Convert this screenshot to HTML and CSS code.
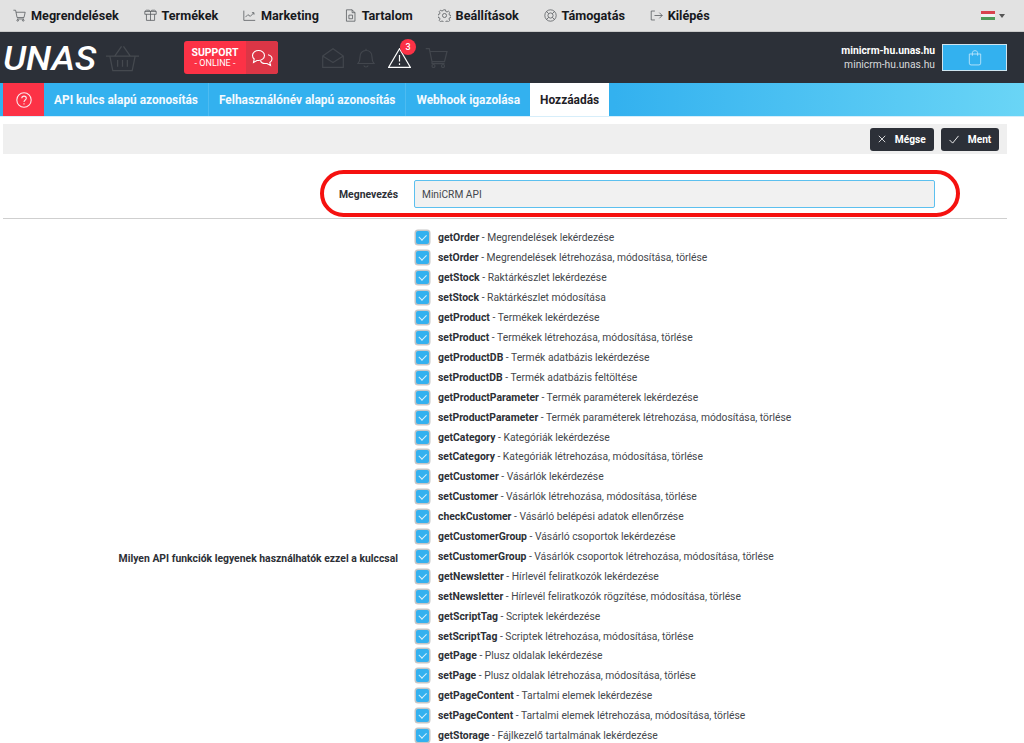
FILE: index.html
```html
<!DOCTYPE html>
<html lang="hu">
<head>
<meta charset="utf-8">
<title>UNAS</title>
<link rel="stylesheet" href="styles.css">
</head>
<body>
<nav class="topbar">
  <a class="top-item"><svg class="ti" viewBox="0 0 16 16"><path d="M.5 1.500h2.700l1.800 9h8.500l1.500-6.500H3.800M5 12.300h8.500"/><circle cx="5.800" cy="14" r="1"/><circle cx="12.600" cy="14" r="1"/></svg>Megrendelések</a>
  <a class="top-item"><svg class="ti" viewBox="0 0 16 16"><path d="M3 6.500V14h10V6.500M1 3h14v3.500H1zM8 3v11M1 3l2-1.500h3.500L8 3l1.500-1.500H13L15 3"/></svg>Termékek</a>
  <a class="top-item"><svg class="ti" viewBox="0 0 16 16"><path d="M1 2v12h14M3 10l3-3 3 2 4-4M11 4.500h2.500V7"/></svg>Marketing</a>
  <a class="top-item"><svg class="ti" viewBox="0 0 14 16"><path d="M2 1h7l3.500 3.500V15H2zM9 1v3.500h3.500M5 7.500h4.500v4.500H5z"/></svg>Tartalom</a>
  <a class="top-item"><svg class="ti" viewBox="0 0 16 16"><circle cx="8" cy="8" r="2.500"/><path d="M6.800 1h2.400l.4 2 1.500.7 1.800-1 1.600 1.600-1 1.800.7 1.500 2 .4v2.400l-2 .4-.7 1.500 1 1.800-1.600 1.600-1.800-1-1.500.7-.4 2H6.800l-.4-2-1.500-.7-1.800 1-1.600-1.600 1-1.800-.7-1.500-2-.4V6.800l2-.4.700-1.500-1-1.800 1.600-1.600 1.800 1 1.500-.7z"/></svg>Beállítások</a>
  <a class="top-item"><svg class="ti" viewBox="0 0 16 16"><circle cx="8" cy="8" r="7"/><circle cx="8" cy="8" r="3.200"/><path d="M3 3l2.700 2.700M13 3l-2.700 2.700M3 13l2.700-2.700M13 13l-2.700-2.700"/></svg>Támogatás</a>
  <a class="top-item"><svg class="ti" viewBox="0 0 16 16"><path d="M6 2.500H1.500v11H6M5.500 8H15M11.500 4.500L15 8l-3.500 3.500"/></svg>Kilépés</a>
  <div class="lang">
    <span class="flag"><i class="flag-r"></i><i class="flag-w"></i><i class="flag-g"></i></span>
    <span class="caret"></span>
  </div>
</nav>

<header class="darkbar">
  <div class="logo">UNAS</div>
  <svg class="basket" viewBox="0 0 36 28"><path d="M1 12h34M5 12l3 15h20l3-15M10 12l7-10M26 12l-7-10M13 16v7M18 16v7M23 16v7"/></svg>
  <div class="support">
    <div class="support-text"><b>SUPPORT</b><span>- ONLINE -</span></div>
    <div class="support-icon">
      <svg viewBox="0 0 22 18"><path d="M1.500 6.500C1.500 3.500 4.500 1.500 7.500 1.500s6 2 6 5-3 5-6 5H6L2.500 13.500l.7-3.500C2 9 1.500 7.800 1.500 6.500z"/><path d="M9.500 11.500c.5 2 2.500 3 4.500 3h2l3.500 2-.7-3c1.500-1 2.200-2.200 2.200-3.500 0-2.200-1.800-3.700-4-4.200"/></svg>
    </div>
  </div>
  <div class="alerts">
    <svg class="al-mail" viewBox="0 0 22 20"><path d="M.7 8L11 .7 21.300 8v11.300H.7zM.7 8L11 14.500 21.300 8"/></svg>
    <svg class="al-bell" viewBox="0 0 18 20"><path d="M1 15.500c1.500-1.500 2-3 2-6.500S5 2.500 9 2.500s6 3 6 6.500.5 5 2 6.500zM9 2.500V.7M7 17.500c0 2 4 2 4 0"/></svg>
    <div class="warn">
      <svg viewBox="0 0 23 20"><path d="M11.500.8L22.300 19.300H.7zM11.500 7v6.500M11.500 15.300v1.700"/></svg>
      <span class="badge">3</span>
    </div>
    <svg class="al-cart" viewBox="0 0 23 20"><path d="M.7.7h3.600l2.700 13h12.500L22 3.500H5M7 13.700v2h12.500"/><circle cx="8.500" cy="18" r="1.500"/><circle cx="18" cy="18" r="1.500"/></svg>
  </div>
  <div class="account">
    <div class="account-text"><b>minicrm-hu.unas.hu</b><span>minicrm-hu.unas.hu</span></div>
    <div class="bag"><svg viewBox="0 0 16 18"><path d="M1.500 5h13v10.500a2 2 0 0 1-2 2h-9a2 2 0 0 1-2-2zM5 7V3.500C5 .5 11 .5 11 3.500V7"/></svg></div>
  </div>
</header>

<div class="tabs">
  <a class="tab-help"><svg viewBox="0 0 16 16"><circle cx="8" cy="8" r="7.200"/><path d="M5.800 6.200C5.800 3.400 10.300 3.400 10.300 6.200 10.300 8 8 8 8 10M8 11.300v1.300"/></svg></a>
  <a class="tab">API kulcs alapú azonosítás</a>
  <a class="tab">Felhasználónév alapú azonosítás</a>
  <a class="tab tab-last">Webhook igazolása</a>
  <a class="tab tab-active">Hozzáadás</a>
</div>

<div class="content">
<div class="toolbar">
  <button class="btn"><svg viewBox="0 0 10 10"><path d="M1 1l8 8M9 1l-8 8"/></svg>Mégse</button>
  <button class="btn"><svg viewBox="0 0 12 10"><path d="M1 5.500l3.500 3.500L11 1"/></svg>Ment</button>
</div>

<main class="form">
  <div class="form-row name-row">
    <label class="form-label">Megnevezés</label>
    <div class="form-field"><input class="text-input" value="MiniCRM API"></div>
    <div class="ring"></div>
  </div>
  <div class="form-row funcs-row">
    <label class="form-label">Milyen API funkciók legyenek használhatók ezzel a kulccsal</label>
    <ul class="funcs">
      <li><span class="check"></span><b>getOrder</b> - Megrendelések lekérdezése</li>
      <li><span class="check"></span><b>setOrder</b> - Megrendelések létrehozása, módosítása, törlése</li>
      <li><span class="check"></span><b>getStock</b> - Raktárkészlet lekérdezése</li>
      <li><span class="check"></span><b>setStock</b> - Raktárkészlet módosítása</li>
      <li><span class="check"></span><b>getProduct</b> - Termékek lekérdezése</li>
      <li><span class="check"></span><b>setProduct</b> - Termékek létrehozása, módosítása, törlése</li>
      <li><span class="check"></span><b>getProductDB</b> - Termék adatbázis lekérdezése</li>
      <li><span class="check"></span><b>setProductDB</b> - Termék adatbázis feltöltése</li>
      <li><span class="check"></span><b>getProductParameter</b> - Termék paraméterek lekérdezése</li>
      <li><span class="check"></span><b>setProductParameter</b> - Termék paraméterek létrehozása, módosítása, törlése</li>
      <li><span class="check"></span><b>getCategory</b> - Kategóriák lekérdezése</li>
      <li><span class="check"></span><b>setCategory</b> - Kategóriák létrehozása, módosítása, törlése</li>
      <li><span class="check"></span><b>getCustomer</b> - Vásárlók lekérdezése</li>
      <li><span class="check"></span><b>setCustomer</b> - Vásárlók létrehozása, módosítása, törlése</li>
      <li><span class="check"></span><b>checkCustomer</b> - Vásárló belépési adatok ellenőrzése</li>
      <li><span class="check"></span><b>getCustomerGroup</b> - Vásárló csoportok lekérdezése</li>
      <li><span class="check"></span><b>setCustomerGroup</b> - Vásárlók csoportok létrehozása, módosítása, törlése</li>
      <li><span class="check"></span><b>getNewsletter</b> - Hírlevél feliratkozók lekérdezése</li>
      <li><span class="check"></span><b>setNewsletter</b> - Hírlevél feliratkozók rögzítése, módosítása, törlése</li>
      <li><span class="check"></span><b>getScriptTag</b> - Scriptek lekérdezése</li>
      <li><span class="check"></span><b>setScriptTag</b> - Scriptek létrehozása, módosítása, törlése</li>
      <li><span class="check"></span><b>getPage</b> - Plusz oldalak lekérdezése</li>
      <li><span class="check"></span><b>setPage</b> - Plusz oldalak létrehozása, módosítása, törlése</li>
      <li><span class="check"></span><b>getPageContent</b> - Tartalmi elemek lekérdezése</li>
      <li><span class="check"></span><b>setPageContent</b> - Tartalmi elemek létrehozása, módosítása, törlése</li>
      <li><span class="check"></span><b>getStorage</b> - Fájlkezelő tartalmának lekérdezése</li>
    </ul>
  </div>
</main>
</div>
</body>
</html>
```
FILE: styles.css
```css
* { box-sizing: border-box; }
html, body { margin: 0; height: 743px; overflow: hidden; background: #fff; }
body { font-family: Roboto, "Liberation Sans", sans-serif; color: #33363c; }
svg { fill: none; stroke: currentColor; stroke-width: 1; display: block; flex: none; }

.topbar { height: 32px; background: #e2e2e2; border-bottom: 1px solid #c9c9c9; display: flex; align-items: center; padding-left: 13px; }
.top-item { display: flex; align-items: center; font-size: 12.650px; font-weight: 700; color: #17191d; margin-right: 24.800px; white-space: nowrap; }
.ti { width: 13px; height: 13px; margin-right: 5px; color: #55585d; stroke-width: .95; }
.lang { margin-left: auto; margin-right: 19px; display: flex; align-items: center; gap: 4px; }
.flag { width: 14px; height: 9px; display: flex; flex-direction: column; }
.flag i { flex: 1; display: block; }
.flag-r { background: #d9434e; }
.flag-w { background: #f2f2f2; }
.flag-g { background: #4f9a58; }
.caret { width: 0; height: 0; border: 3px solid transparent; border-top: 4px solid #555; margin-top: 4px; }

.darkbar { height: 51px; background: #2c3038; display: flex; align-items: center; padding-left: 3px; }
.logo { font-size: 34px; font-weight: 500; font-style: italic; color: #fff; width: 92px; transform: scaleX(1.07); transform-origin: left center; line-height: 1; }
.basket { width: 35px; height: 28px; margin-left: 10px; color: #45494f; stroke-width: 1.3; }
.support { margin-left: 44px; width: 94px; height: 33px; border-radius: 3px; background: #fc3246; display: flex; color: #fff; overflow: hidden; }
.support-text { width: 62px; display: flex; flex-direction: column; align-items: center; justify-content: center; line-height: 10px; }
.support-text b { font-size: 10.500px; font-weight: 700; }
.support-text span { font-size: 9px; }
.support-icon { flex: 1; background: #db3646; display: flex; align-items: center; justify-content: center; }
.support-icon svg { width: 22px; height: 18px; stroke-width: 1.1; }
.alerts { display: flex; align-items: center; margin-left: 44px; color: #42464d; }
.alerts svg { stroke-width: 1.2; }
.al-mail { width: 22px; height: 20px; margin-right: 13px; }
.al-bell { width: 18px; height: 20px; margin-right: 13px; }
.al-cart { width: 23px; height: 20px; margin-left: 14px; }
.warn { position: relative; width: 23px; color: #fff; }
.warn svg { width: 23px; height: 20px; }
.badge { position: absolute; left: 12px; top: -9px; width: 16px; height: 16px; border-radius: 50%; background: #fc3246; color: #fff; font-size: 9px; font-weight: 500; display: flex; align-items: center; justify-content: center; }
.account { margin-left: auto; margin-right: 17px; display: flex; align-items: center; gap: 7px; }
.account-text { display: flex; flex-direction: column; align-items: flex-end; color: #d8dadc; font-size: 10.300px; line-height: 13.500px; }
.account-text b { color: #fff; font-weight: 700; }
.bag { width: 65px; height: 27px; background: #33b1ef; border: 1px solid #cfe4ee; display: flex; align-items: center; justify-content: center; color: #bfe6fa; }
.bag svg { width: 14px; height: 17px; }

.tabs { height: 33px; display: flex; padding-left: 3px; background: linear-gradient(90deg, #33b1ef 0, #33b1ef 60%, #6ad5f6 100%); box-shadow: 0 1px 0 #d7eefa; }
.tab-help { width: 41px; background: #fc3246; color: #fbeaec; display: flex; align-items: center; justify-content: center; }
.tab-help svg { width: 16px; height: 16px; stroke-width: 1.1; }
.tab { display: flex; align-items: center; padding: 0 10px; font-size: 11.900px; font-weight: 700; color: #f3fafe; border-right: 1px solid #4dbbf1; white-space: nowrap; }
.tab-last { border-right: 0; }
.tab-active { background: #fff; color: #1e2126; border-right: 0; }

.content { margin: 0 17px 0 3px; }
.toolbar { height: 30px; margin-top: 8px; background: #efefef; display: flex; justify-content: flex-end; align-items: center; gap: 7px; padding-right: 8px; }
.btn { height: 23px; border: 0; border-radius: 3px; background: #2c3038; color: #fff; font: 700 10.200px Roboto, sans-serif; display: flex; align-items: center; padding: 0 7.700px; }
.btn svg { width: 8px; height: 8px; margin-right: 9px; }
.btn + .btn svg { width: 12px; height: 9px; margin-right: 7.500px; }

.form-row { display: grid; grid-template-columns: 395px 1fr; column-gap: 16px; }
.form-label { font-size: 10.400px; font-weight: 700; color: #2d3036; text-align: right; align-self: center; }
.name-row { position: relative; padding-top: 26px; border-bottom: 1px solid #cfcfcf; height: 65px; grid-template-rows: 28px; }
.form-field { width: 521px; height: 28px; }
.text-input { display: block; width: 100%; height: 28px; border: 1px solid #5cc0ef; border-radius: 2px; background: #f1f1f1; padding: 0 7px; font: 10.200px Roboto, sans-serif; color: #44474c; }
.ring { position: absolute; left: 317px; top: 16px; width: 640px; height: 47px; border: 4px solid #f5110f; border-radius: 24px; }
.funcs-row { height: 678px; }
.funcs { list-style: none; margin: 0; padding: 9px 0 0; align-self: start; }
.funcs li { height: 19.920px; display: flex; align-items: center; font-size: 10.300px; color: #44474c; white-space: pre; }
.funcs b { color: #2d3036; font-weight: 700; font-size: 10.400px; }
.check { width: 13px; height: 13px; margin: 0 9.500px 0 1.500px; border-radius: 2px; background: #33b1ef; box-shadow: 0 0 0 1.500px #c6c6c6; position: relative; }
.check::after { content: ""; position: absolute; left: 3.500px; top: 3px; width: 6px; height: 3.500px; border-left: 1px solid #d8f0fb; border-bottom: 1px solid #d8f0fb; transform: rotate(-45deg); }
```
